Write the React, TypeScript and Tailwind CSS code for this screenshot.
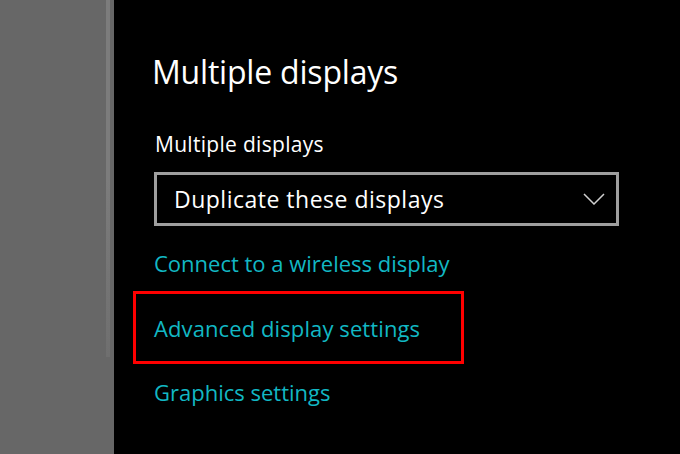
export default function App() {
  return (
    <div className="w-[680px] h-[454px] flex bg-black overflow-hidden" style={{ fontFamily: '"Open Sans", "Noto Sans", sans-serif' }}>
      <div className="w-[114px] h-full bg-[#676767] flex justify-end pr-[4px]">
        <div className="w-[4px] h-[357px] bg-gradient-to-b from-[#7c7c7c] via-[#7c7c7c] to-[#6f6f6f]" />
      </div>
      <div className="flex-1 flex flex-col pt-[52px]">
        <h1 className="pl-[38px] text-[32px] leading-[40px] text-white font-normal tracking-[-0.2px]">Multiple displays</h1>
        <div className="pl-[41px] mt-[38px] text-[21px] leading-[28px] text-white tracking-[0.3px]">Multiple displays</div>
        <div className="ml-[40px] mt-[14px] w-[465px] h-[54px] border-[3px] border-[#9f9f9f] flex items-center justify-between pl-[17px] pr-[11px]">
          <span className="text-[23px] leading-[28px] text-white tracking-[0.5px]">Duplicate these displays</span>
          <svg width="22" height="12" viewBox="0 0 22 12" fill="none">
            <path d="M1 1 L11 11 L21 1" stroke="#d0d0d0" strokeWidth="1.5" />
          </svg>
        </div>
        <a className="pl-[40px] mt-[23px] text-[22px] leading-[28px] text-[#12b8c4]">Connect to a wireless display</a>
        <div className="ml-[19px] mt-[14px] w-[331px] h-[73px] border-[3px] border-[#ff0000] flex items-center pl-[18px]">
          <span className="text-[22px] leading-[28px] text-[#12b8c4] tracking-[0.1px]">Advanced display settings</span>
        </div>
        <a className="pl-[40px] mt-[14px] text-[22px] leading-[28px] text-[#12b8c4]">Graphics settings</a>
      </div>
    </div>
  )
}
